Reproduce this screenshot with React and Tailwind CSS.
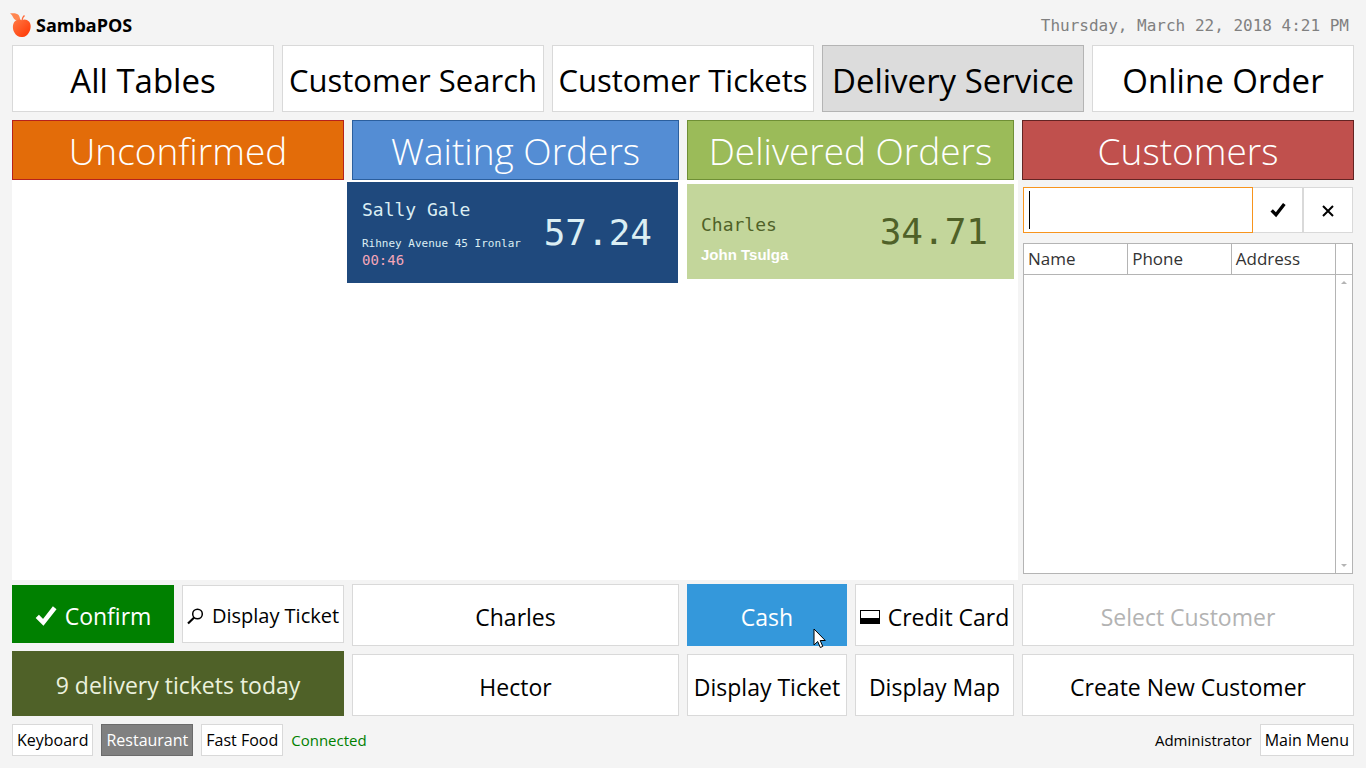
import React, { useState } from 'react'

const SCREENS = [
  { name: 'All Tables', size: 'text-[33px]' },
  { name: 'Customer Search', size: 'text-[31px]' },
  { name: 'Customer Tickets', size: 'text-[31px]' },
  { name: 'Delivery Service', size: 'text-[33px]' },
  { name: 'Online Order', size: 'text-[33px]' },
]

const HEADINGS = [
  { name: 'Unconfirmed', cls: 'bg-[#e36c09] border-[#b5221c]' },
  { name: 'Waiting Orders', cls: 'bg-[#548dd4] border-[#2b5f9e]' },
  { name: 'Delivered Orders', cls: 'bg-[#9bbb59] border-[#6f8f35]' },
  { name: 'Customers', cls: 'bg-[#c0504d] border-[#632423]' },
]

function AppleLogo() {
  return (
    <svg width="22" height="25" viewBox="0 0 22 25" aria-hidden="true">
      <defs>
        <linearGradient id="apple" x1="0" y1="0" x2="1" y2="1">
          <stop offset="0" stopColor="#ff7a45" />
          <stop offset="1" stopColor="#ff3300" />
        </linearGradient>
      </defs>
      <path d="M0 0.5C3 0 7 0 8.6 2C10 3.8 10 6 10.5 8C7 8 4 7 3.2 4.5C2.7 3 1.5 1.5 0 0.5Z" fill="#ff8650" />
      <path d="M11.5 7.5C11.7 5.5 12.3 3.5 14 2L15 3C13.5 4.3 12.9 5.8 12.8 7.5Z" fill="#ff6a3a" />
      <path d="M12 7.3C14 5.8 17 6.3 19 8.5C21.2 11 21.2 15.5 19.2 19C17.4 22.5 14.6 24.3 12 24C8.8 24.3 5.8 22.6 4.1 19C2.4 15.5 2.5 11 4.7 8.5C6.7 6.3 10 5.8 12 7.3Z" fill="url(#apple)" />
    </svg>
  )
}

function Check({ size = 24 }) {
  return (
    <svg width={size} height={size} viewBox="0 0 24 24" fill="none" stroke="currentColor" strokeWidth="5" aria-hidden="true">
      <path d="M2.5 12.5L9 19L21.5 3" />
    </svg>
  )
}

function Cross() {
  return (
    <svg width="12" height="12" viewBox="0 0 12 12" fill="none" stroke="currentColor" strokeWidth="2" aria-hidden="true">
      <path d="M1 1L11 11M11 1L1 11" />
    </svg>
  )
}

function Magnifier() {
  return (
    <svg width="17" height="17" viewBox="0 0 17 17" fill="none" stroke="currentColor" aria-hidden="true">
      <circle cx="10.5" cy="6" r="4.8" strokeWidth="1.5" />
      <path d="M7.2 9.5L1 15.5" strokeWidth="2.2" />
    </svg>
  )
}

function CreditCard() {
  return (
    <svg width="20" height="14" viewBox="0 0 20 14" aria-hidden="true">
      <rect x="0.5" y="0.5" width="19" height="13" fill="#fff" stroke="#000" />
      <rect x="0" y="8" width="20" height="6" fill="#000" />
    </svg>
  )
}

function Pointer() {
  return (
    <svg className="absolute top-[44px] left-[126px] z-10" width="14" height="21" viewBox="0 0 14 21" aria-hidden="true">
      <path d="M1 1V17L4.7 13.5L7.3 19.5L9.8 18.4L7.2 12.5H12.3Z" fill="#fff" stroke="#000" />
    </svg>
  )
}

function ActionButton({ children, className = 'text-[23px]', ...props }) {
  return (
    <button
      className={`flex flex-1 items-center justify-center gap-2 border border-[#d9d9d9] bg-white pt-1 whitespace-nowrap disabled:text-[#b3b3b3] ${className}`}
      {...props}
    >
      {children}
    </button>
  )
}

function FooterButton({ active, children }) {
  return (
    <button
      className={`h-8 border px-1 text-[16px] ${active ? 'border-[#6b6b6b] bg-[#808080] text-white' : 'border-[#d9d9d9] bg-white'}`}
    >
      {children}
    </button>
  )
}

function CustomerPanel() {
  const [query, setQuery] = useState('')

  return (
    <section className="flex min-w-0 flex-col gap-[10px] px-px pt-[7px] pb-[6px]">
      <form className="flex h-[46px]" onSubmit={e => e.preventDefault()}>
        <div className="relative flex min-w-0 flex-1">
          <input
            aria-label="Search customers"
            value={query}
            onChange={e => setQuery(e.target.value)}
            className="w-full border border-[#f7941d] bg-white px-[5px] text-[30px] outline-none"
          />
          {!query && <span className="pointer-events-none absolute inset-y-1 left-1.5 w-px bg-black" />}
        </div>
        <button aria-label="Search" className="flex w-[50px] items-center justify-center border border-l-0 border-[#d9d9d9] bg-white">
          <Check size={16} />
        </button>
        <button type="button" aria-label="Clear" onClick={() => setQuery('')} className="flex w-[50px] items-center justify-center border border-[#d9d9d9] bg-white pt-0.5">
          <Cross />
        </button>
      </form>

      <div className="flex flex-1 flex-col border border-[#b4b4b4] bg-white">
        <table className="w-full table-fixed text-left text-[17px] text-[#333]">
          <thead>
            <tr className="h-[30px] border-b border-[#b4b4b4]">
              <th className="border-r border-[#b4b4b4] px-1 font-normal">Name</th>
              <th className="border-r border-[#b4b4b4] px-1 font-normal">Phone</th>
              <th className="border-r border-[#b4b4b4] px-1 font-normal">Address</th>
              <td className="w-[17px]" />
            </tr>
          </thead>
        </table>
        <div className="flex w-[17px] flex-1 flex-col items-center justify-between self-end border-l border-[#b4b4b4] py-1.5 text-[#b4b4b4]">
          <svg width="6" height="3" viewBox="0 0 6 3" aria-hidden="true"><path d="M0 3L3 0L6 3Z" fill="currentColor" /></svg>
          <svg width="6" height="3" viewBox="0 0 6 3" aria-hidden="true"><path d="M0 0L3 3L6 0Z" fill="currentColor" /></svg>
        </div>
      </div>
    </section>
  )
}

export default function App() {
  const [screen, setScreen] = useState('Delivery Service')

  return (
    <div className="flex min-h-screen flex-col bg-[#f4f4f4] px-3 pb-3 font-['Open_Sans','Noto_Sans',sans-serif] text-black">
      <header className="flex h-[45px] items-center justify-between pt-1.5">
        <div className="-ml-0.5 flex items-center gap-1">
          <AppleLogo />
          <h1 className="text-[18px] font-bold">SambaPOS</h1>
        </div>
        <time className="pr-[5px] font-['DejaVu_Sans_Mono',monospace] text-[16px] text-[#808080]">
          Thursday, March 22, 2018 4:21 PM
        </time>
      </header>

      <nav className="grid grid-cols-5 gap-2">
        {SCREENS.map(s => (
          <button
            key={s.name}
            onClick={() => setScreen(s.name)}
            className={`h-[67px] border pt-1 whitespace-nowrap ${s.size} ${screen === s.name ? 'border-[#b4b4b4] bg-[#dcdcdc]' : 'border-[#d9d9d9] bg-white'}`}
          >
            {s.name}
          </button>
        ))}
      </nav>

      <main className="grid flex-1 grid-cols-[minmax(0,332fr)_minmax(0,327fr)_minmax(0,327fr)_minmax(0,332fr)] grid-rows-[auto_1fr_auto] gap-x-2 pt-2">
        {HEADINGS.map(h => (
          <h2
            key={h.name}
            className={`flex h-[60px] items-center justify-center border pt-0.5 text-[37px] font-light whitespace-nowrap text-white ${h.cls}`}
          >
            {h.name}
          </h2>
        ))}

        {/* Ticket lists */}
        <div className="col-span-3 -mr-1 grid grid-cols-[minmax(0,332fr)_minmax(0,327fr)_minmax(0,327fr)] gap-x-2 bg-white pr-1">
          <div />
          <div className="pt-0.5 font-['DejaVu_Sans_Mono',monospace]">
            <button className="-ml-[5px] flex h-[101px] w-[calc(100%+4px)] items-center justify-between bg-[#1f497d] pr-[26px] pl-[15px] text-left text-[#dbeef3]">
              <span className="flex flex-col whitespace-nowrap">
                <span className="mb-3.5 text-[18px] leading-6">Sally Gale</span>
                <span className="text-[11px] leading-4">Rihney Avenue 45 Ironlar</span>
                <span className="text-[14px] leading-4 text-[#f4a6b8]">00:46</span>
              </span>
              <span className="text-[36px]">57.24</span>
            </button>
          </div>
          <div className="pt-1 font-['DejaVu_Sans_Mono',monospace]">
            <button className="flex h-[95px] w-full items-center justify-between bg-[#c3d69b] pr-[26px] pl-[14px] text-left text-[#4f6128]">
              <span className="flex flex-col pt-4">
                <span className="mb-1.5 text-[18px] leading-6">Charles</span>
                <span className="font-['Liberation_Sans',sans-serif] text-[15px] leading-6 font-bold text-white">John Tsulga</span>
              </span>
              <span className="text-[36px]">34.71</span>
            </button>
          </div>
        </div>
        <CustomerPanel />

        {/* Actions */}
        <div className="flex h-[136px] flex-col gap-2 pt-[5px]">
          <div className="grid h-[58px] grid-cols-2 gap-2">
            <button className="flex items-center justify-center gap-2 bg-[#008000] pt-1 text-[23px] text-white">
              <Check size={22} />
              Confirm
            </button>
            <ActionButton className="text-[20px]">
              <Magnifier />
              Display Ticket
            </ActionButton>
          </div>
          <button className="flex-1 bg-[#4f6128] pt-1 text-[23px] text-[#ebf1dd]">9 delivery tickets today</button>
        </div>
        <div className="flex flex-col gap-2 pt-1">
          <ActionButton>Charles</ActionButton>
          <ActionButton>Hector</ActionButton>
        </div>
        <div className="grid grid-cols-[minmax(0,160fr)_minmax(0,159fr)] gap-2 pt-1">
          <button className="relative bg-[#3498db] pt-1 text-[23px] text-white">
            Cash
            <Pointer />
          </button>
          <ActionButton>
            <CreditCard />
            Credit Card
          </ActionButton>
          <ActionButton>Display Ticket</ActionButton>
          <ActionButton>Display Map</ActionButton>
        </div>
        <div className="flex flex-col gap-2 pt-1">
          <ActionButton disabled>Select Customer</ActionButton>
          <ActionButton>Create New Customer</ActionButton>
        </div>
      </main>

      <footer className="flex items-center gap-2 pt-2">
        <FooterButton>Keyboard</FooterButton>
        <FooterButton active>Restaurant</FooterButton>
        <FooterButton>Fast Food</FooterButton>
        <span className="flex-1 text-[15px] text-[#008000]">Connected</span>
        <span className="text-[15px]">Administrator</span>
        <FooterButton>Main Menu</FooterButton>
      </footer>
    </div>
  )
}
